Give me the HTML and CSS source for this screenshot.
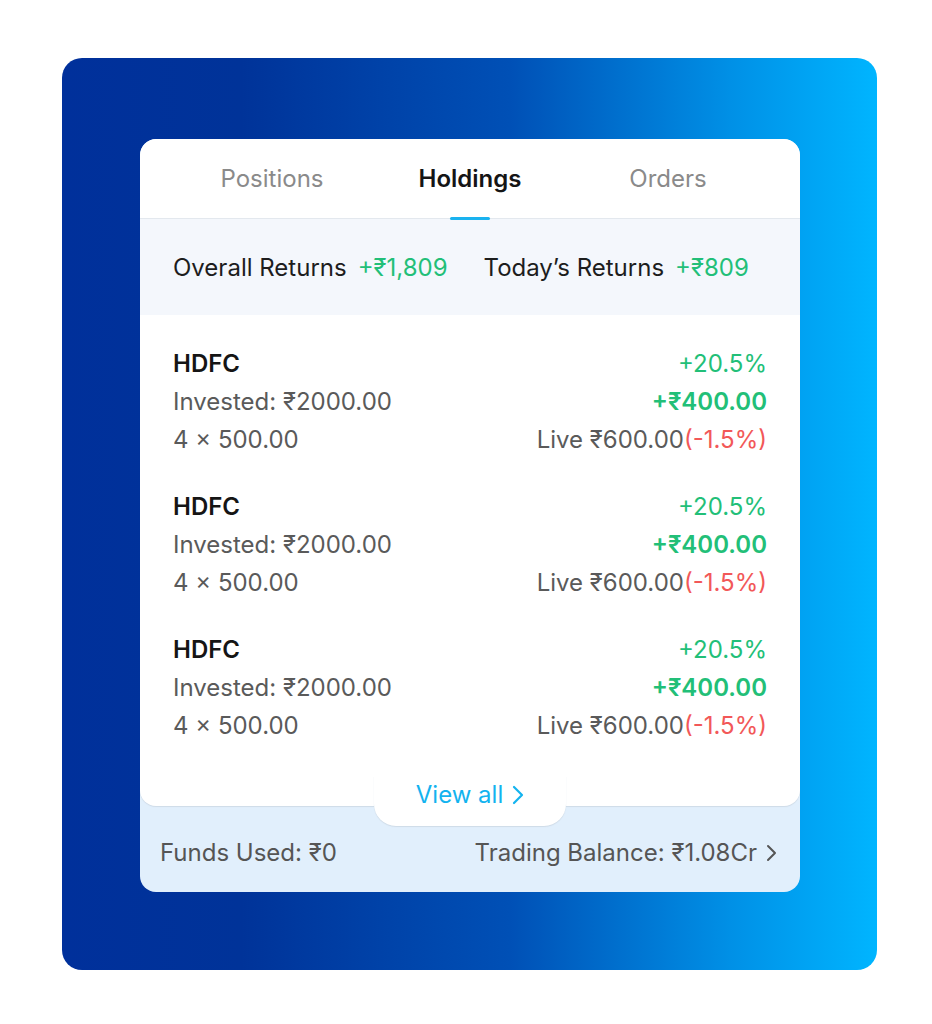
FILE: index.html
```html
<!DOCTYPE html>
<html>
<head>
<meta charset="utf-8">
<link rel="stylesheet" href="styles.css">
</head>
<body>
<div class="stage">
  <div class="card">
    <div class="panel">
      <div class="tabs">
        <div class="tab">Positions</div>
        <div class="tab active">Holdings</div>
        <div class="tab">Orders</div>
      </div>
      <div class="summary">
        <span class="label">Overall Returns</span><span class="pos">+₹1,809</span>
        <span class="label second">Today’s Returns</span><span class="pos">+₹809</span>
      </div>
      <div class="list">
        <div class="item">
          <div class="row"><span class="name">HDFC</span><span class="pos">+20.5%</span></div>
          <div class="row"><span class="muted">Invested: ₹2000.00</span><span class="pos bold">+₹400.00</span></div>
          <div class="row"><span class="muted">4 × 500.00</span><span class="muted">Live ₹600.00<span class="neg">(-1.5%)</span></span></div>
        </div>
        <div class="item">
          <div class="row"><span class="name">HDFC</span><span class="pos">+20.5%</span></div>
          <div class="row"><span class="muted">Invested: ₹2000.00</span><span class="pos bold">+₹400.00</span></div>
          <div class="row"><span class="muted">4 × 500.00</span><span class="muted">Live ₹600.00<span class="neg">(-1.5%)</span></span></div>
        </div>
        <div class="item">
          <div class="row"><span class="name">HDFC</span><span class="pos">+20.5%</span></div>
          <div class="row"><span class="muted">Invested: ₹2000.00</span><span class="pos bold">+₹400.00</span></div>
          <div class="row"><span class="muted">4 × 500.00</span><span class="muted">Live ₹600.00<span class="neg">(-1.5%)</span></span></div>
        </div>
      </div>
      <div class="viewall">
        <span>View all</span>
        <svg class="chev" width="12" height="20" viewBox="0 0 12 20"><path d="M2 2 L10 10 L2 18" fill="none" stroke="currentColor" stroke-width="2.2" stroke-linecap="round" stroke-linejoin="round"/></svg>
      </div>
    </div>
    <div class="funds">
      <span>Funds Used: ₹0</span>
      <span class="bal">Trading Balance: ₹1.08Cr
        <svg class="chev" width="12" height="20" viewBox="0 0 12 20"><path d="M2 3 L9 10 L2 17" fill="none" stroke="currentColor" stroke-width="2" stroke-linecap="round" stroke-linejoin="round"/></svg>
      </span>
    </div>
  </div>
</div>
</body>
</html>
```
FILE: styles.css
```css
* { box-sizing: border-box; }
html, body { margin: 0; padding: 0; background: #fff; }
body {
  font-family: Inter, "Noto Sans", "DejaVu Sans", sans-serif;
  width: 932px;
  height: 1024px;
}
.stage {
  margin: 58px 0 0 62px;
  width: 815px;
  height: 912px;
  border-radius: 20px;
  background: linear-gradient(90deg, #00309b 0%, #003399 22%, #0050b6 55%, #0090e6 82%, #00b5ff 100%);
  padding: 81px 0 0 78px;
}
.card {
  width: 660px;
  height: 753px;
  border-radius: 16px;
  background: #e1effc;
  display: flex;
  flex-direction: column;
  overflow: hidden;
}
.panel {
  background: #fff;
  border-radius: 16px;
  box-shadow: 0 1px 1px #cfdbe7;
  display: flex;
  flex-direction: column;
  flex-shrink: 0;
  position: relative;
  z-index: 1;
}
.panel > * { flex-shrink: 0; }
.tabs {
  display: grid;
  grid-template-columns: repeat(3, 1fr);
  padding: 0 33px;
  height: 80px;
  border-bottom: 1.5px solid #e3e8ee;
}
.tab {
  display: flex;
  align-items: center;
  justify-content: center;
  font-size: 24px;
  color: #8a8a8a;
  position: relative;
}
.tab.active {
  color: #151515;
  font-weight: 600;
}
.tab.active::after {
  content: "";
  position: absolute;
  left: 50%;
  bottom: -1.5px;
  width: 40px;
  margin-left: -20px;
  height: 2.5px;
  background: #1ab2ef;
  border-radius: 2px;
}
.summary {
  background: #f4f7fc;
  height: 96px;
  display: flex;
  align-items: center;
  padding: 0 33px;
  font-size: 24px;
}
.summary .label { color: #1d1d1d; margin-right: 11px; }
.summary .second { margin-left: 36px; }
.pos { color: #22bf78; }
.neg { color: #f25858; }
.bold { font-weight: 600; }
.list {
  padding: 29px 33px 0;
  display: flex;
  flex-direction: column;
  gap: 29px;
}
.row {
  display: flex;
  justify-content: space-between;
  align-items: center;
  height: 38px;
  font-size: 24px;
}
.name { font-weight: 600; color: #151515; }
.muted { color: #5a5a5a; }
.viewall {
  margin-top: 32px;
  margin-bottom: -20px;
  align-self: center;
  width: 192px;
  height: 50px;
  background: #fff;
  border-radius: 0 0 22px 22px;
  box-shadow: 0 1px 1px #cfdbe7;
  display: flex;
  align-items: flex-start;
  justify-content: center;
  gap: 9px;
  padding-top: 5px;
  font-size: 24px;
  color: #13b3ef;
  line-height: 28px;
  position: relative;
  z-index: 2;
}
.viewall .chev { margin-top: 4px; }
.funds {
  display: flex;
  justify-content: space-between;
  align-items: center;
  padding: 33px 22px 0 20px;
  font-size: 24px;
  color: #555;
  line-height: 28px;
}
.bal { display: flex; align-items: center; gap: 9px; }
```
